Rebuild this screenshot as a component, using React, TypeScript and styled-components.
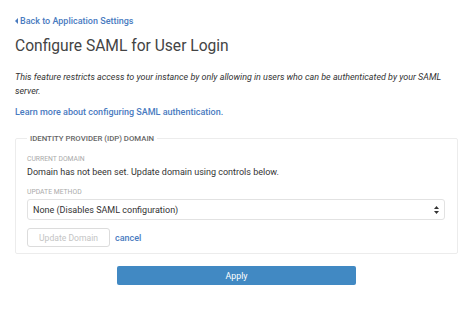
import React from "react";
import styled, { createGlobalStyle } from "styled-components";

const Global = createGlobalStyle`
  html, body { margin: 0; padding: 0; background: #fff; }
  body { font-family: Roboto, "Liberation Sans", Arial, sans-serif; color: #333; }
`;

const Page = styled.div`
  padding: 14px 16px 0 15px;
  display: flex;
  flex-direction: column;
`;

const BackLink = styled.a`
  font-size: 9px;
  font-weight: 500;
  color: #4a7bbf;
  text-decoration: none;
  display: flex;
  align-items: center;
  gap: 2px;
  line-height: 14px;
`;

const Caret = styled.span`
  width: 0;
  height: 0;
  border-top: 3px solid transparent;
  border-bottom: 3px solid transparent;
  border-right: 3px solid #4a7bbf;
`;

const Title = styled.h1`
  margin: 8px 0 0 0;
  font-size: 15.6px;
  font-weight: 400;
  color: #444;
  line-height: 20px;
`;

const Intro = styled.p`
  margin: 14px 0 0 0;
  font-size: 8.95px;
  font-style: italic;
  color: #333;
  line-height: 14px;
`;

const LearnLink = styled.a`
  margin-top: 7px;
  font-size: 9px;
  font-weight: 500;
  color: #4a7bbf;
  text-decoration: none;
  line-height: 14px;
`;

const Fieldset = styled.fieldset`
  margin: 15px 0 0 0;
  padding: 5px 12px 6px 11px;
  border: 1px solid #ececec;
  border-radius: 2px;
  display: flex;
  flex-direction: column;
`;

const Legend = styled.legend`
  font-size: 7.8px;
  font-weight: 500;
  color: #666;
  padding: 0 3px;
  margin-left: 0;
  text-transform: uppercase;
`;

const Label = styled.div<{ $top: number }>`
  font-size: 6.8px;
  color: #aaa;
  text-transform: uppercase;
  line-height: 10px;
  margin-top: ${(p) => p.$top}px;
`;

const Value = styled.div`
  margin-top: 2px;
  font-size: 9px;
  color: #333;
  line-height: 12px;
`;

const Select = styled.div`
  margin-top: 2px;
  height: 19px;
  border: 1px solid #e2e2e2;
  border-radius: 3px;
  display: flex;
  align-items: center;
  justify-content: space-between;
  padding: 0 5px 0 5px;
  font-size: 9px;
  color: #333;
`;

const Arrows = styled.svg`
  width: 5px;
  height: 8px;
`;

const Actions = styled.div`
  margin-top: 8px;
  display: flex;
  align-items: center;
  gap: 5px;
`;

const GhostButton = styled.button`
  width: 83px;
  height: 19px;
  border: 1px solid #dcdcdc;
  border-radius: 3px;
  background: #fff;
  color: #c4c4c4;
  font-family: inherit;
  font-size: 8.6px;
  padding: 0;
`;

const Cancel = styled.a`
  font-size: 9px;
  color: #4a7bbf;
  font-weight: 500;
`;

const ApplyRow = styled.div`
  display: flex;
  justify-content: center;
  margin-top: 12px;
`;

const Apply = styled.button`
  width: 239px;
  height: 19px;
  border: none;
  border-radius: 2px;
  background: #4189c3;
  color: #fff;
  font-family: inherit;
  font-size: 8.8px;
`;

export default function App() {
  return (
    <>
      <Global />
      <Page>
        <BackLink>
          <Caret />
          Back to Application Settings
        </BackLink>
        <Title>Configure SAML for User Login</Title>
        <Intro>
          This feature restricts access to your instance by only allowing in users who can be authenticated by your SAML
          server.
        </Intro>
        <LearnLink>Learn more about configuring SAML authentication.</LearnLink>
        <Fieldset>
          <Legend>Identity Provider (IDP) Domain</Legend>
          <Label $top={6}>Current Domain</Label>
          <Value>Domain has not been set. Update domain using controls below.</Value>
          <Label $top={9}>Update Method</Label>
          <Select>
            <span>None (Disables SAML configuration)</span>
            <Arrows viewBox="0 0 5 8">
              <path d="M2.5 0 L5 3 L0 3 Z" fill="#333" />
              <path d="M2.5 8 L5 5 L0 5 Z" fill="#333" />
            </Arrows>
          </Select>
          <Actions>
            <GhostButton disabled>Update Domain</GhostButton>
            <Cancel>cancel</Cancel>
          </Actions>
        </Fieldset>
        <ApplyRow>
          <Apply>Apply</Apply>
        </ApplyRow>
      </Page>
    </>
  );
}
